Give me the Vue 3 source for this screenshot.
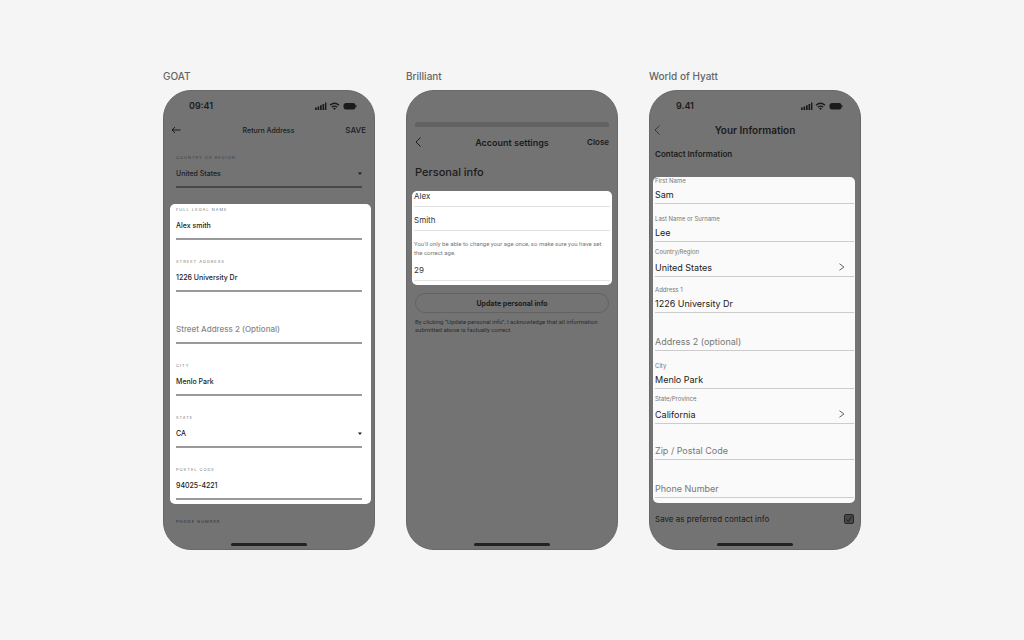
<script setup>
import { reactive } from 'vue'

const goatFields = reactive([
  { id: 'g-name', label: 'Full legal name', value: 'Alex smith' },
  { id: 'g-street', label: 'Street address', value: '1226 University Dr' },
  { id: 'g-street2', placeholder: 'Street Address 2 (Optional)', value: '' },
  { id: 'g-city', label: 'City', value: 'Menlo Park' },
  { id: 'g-state', label: 'State', value: 'CA', select: true },
  { id: 'g-postal', label: 'Postal code', value: '94025-4221' },
])

const hyattFields = reactive([
  { id: 'h-first', label: 'First Name', value: 'Sam' },
  { id: 'h-last', label: 'Last Name or Surname', value: 'Lee' },
  { id: 'h-country', label: 'Country/Region', value: 'United States', select: true },
  { id: 'h-address', label: 'Address 1', value: '1226 University Dr' },
  { id: 'h-address2', placeholder: 'Address 2 (optional)', value: '' },
  { id: 'h-city', label: 'City', value: 'Menlo Park' },
  { id: 'h-state', label: 'State/Province', value: 'California', select: true },
  { id: 'h-zip', placeholder: 'Zip / Postal Code', value: '' },
  { id: 'h-phone', placeholder: 'Phone Number', value: '' },
])

const person = reactive({ first: 'Alex', last: 'Smith', age: '29' })
</script>

<template>
  <main class="board">
    <section class="column">
      <h2 class="caption">GOAT</h2>
      <div class="phone goat">
        <div class="status">
          <span class="time">09:41</span>
          <svg class="signals" width="42" height="10" viewBox="0 0 42 10" aria-hidden="true">
            <path d="M0 6.5h1.7V9H0zM2.5 5.5h1.7V9H2.5zM5 4.2h1.7V9H5zM7.5 3h1.7V9H7.5zM10 1.5h1.4V9H10z" />
            <path class="wave" d="M15 4.2Q19.5.3 24 4.2M16.8 6.2Q19.5 4 22.2 6.2" />
            <path d="M18 7.3q1.5-1.2 3 0L19.5 9z" />
            <rect x="28.5" y="2" width="12" height="6.5" rx="2.5" />
            <path class="cap" d="M41 4.2v2" />
          </svg>
        </div>
        <div class="nav">
          <button type="button" aria-label="Back">
            <svg width="10" height="8" viewBox="0 0 10 8" aria-hidden="true"><path class="stroke" d="M9.5 4H1M4 1 1 4l3 3" /></svg>
          </button>
          <h3>Return Address</h3>
          <button type="button" class="save">SAVE</button>
        </div>
        <div class="field shaded">
          <label for="g-country">Country or region</label>
          <div class="control">
            <select id="g-country"><option>United States</option></select>
            <svg class="caret" width="4" height="3" viewBox="0 0 4 3" aria-hidden="true"><path d="M0 .5h4L2 3z" /></svg>
          </div>
        </div>
        <form class="card">
          <div v-for="f in goatFields" :key="f.id" class="field">
            <label v-if="f.label" :for="f.id">{{ f.label }}</label>
            <div class="control">
              <template v-if="f.select">
                <select :id="f.id" v-model="f.value"><option>{{ f.value }}</option></select>
                <svg class="caret" width="4" height="3" viewBox="0 0 4 3" aria-hidden="true"><path d="M0 .5h4L2 3z" /></svg>
              </template>
              <input v-else :id="f.id" v-model="f.value" type="text" :placeholder="f.placeholder" :aria-label="f.placeholder" />
            </div>
          </div>
        </form>
        <p class="next">Phone number</p>
        <div class="home"></div>
      </div>
    </section>

    <section class="column">
      <h2 class="caption">Brilliant</h2>
      <div class="phone brilliant">
        <div class="sheet"></div>
        <div class="nav">
          <button type="button" aria-label="Back">
            <svg width="6" height="10" viewBox="0 0 6 10" aria-hidden="true"><path class="stroke" d="M5.5.5 1 5l4.5 4.5" /></svg>
          </button>
          <h3>Account settings</h3>
          <button type="button" class="close">Close</button>
        </div>
        <h4>Personal info</h4>
        <form class="card">
          <input v-model="person.first" type="text" aria-label="First name" />
          <input v-model="person.last" type="text" aria-label="Last name" />
          <label for="b-age">You'll only be able to change your age once, so make sure you have set the correct age.</label>
          <input id="b-age" v-model="person.age" type="text" />
        </form>
        <button type="button" class="update">Update personal info</button>
        <p class="terms">By clicking “Update personal info”, I acknowledge that all information submitted above is factually correct.</p>
        <div class="home"></div>
      </div>
    </section>

    <section class="column">
      <h2 class="caption">World of Hyatt</h2>
      <div class="phone hyatt">
        <div class="status">
          <span class="time">9.41</span>
          <svg class="signals" width="42" height="10" viewBox="0 0 42 10" aria-hidden="true">
            <path d="M0 6.5h1.7V9H0zM2.5 5.5h1.7V9H2.5zM5 4.2h1.7V9H5zM7.5 3h1.7V9H7.5zM10 1.5h1.4V9H10z" />
            <path class="wave" d="M15 4.2Q19.5.3 24 4.2M16.8 6.2Q19.5 4 22.2 6.2" />
            <path d="M18 7.3q1.5-1.2 3 0L19.5 9z" />
            <rect x="28.5" y="2" width="12" height="6.5" rx="2.5" />
            <path class="cap" d="M41 4.2v2" />
          </svg>
        </div>
        <div class="nav">
          <button type="button" aria-label="Back">
            <svg width="6" height="10" viewBox="0 0 6 10" aria-hidden="true"><path class="stroke" d="M5.5.5 1 5l4.5 4.5" /></svg>
          </button>
          <h3>Your Information</h3>
          <span></span>
        </div>
        <h4>Contact Information</h4>
        <form class="card">
          <div v-for="f in hyattFields" :key="f.id" class="field" :class="{ pick: f.select }">
            <label v-if="f.label" :for="f.id">{{ f.label }}</label>
            <div class="control">
              <template v-if="f.select">
                <select :id="f.id" v-model="f.value"><option>{{ f.value }}</option></select>
                <svg class="chevron" width="6" height="8" viewBox="0 0 6 8" aria-hidden="true"><path class="stroke" d="M.5.5 5.3 4 .5 7.5" /></svg>
              </template>
              <input v-else :id="f.id" v-model="f.value" type="text" :placeholder="f.placeholder" :aria-label="f.placeholder" />
            </div>
          </div>
        </form>
        <label class="preferred">
          <span>Save as preferred contact info</span>
          <span class="tick">
            <input type="checkbox" checked />
            <svg width="10" height="10" viewBox="0 0 10 10" aria-hidden="true"><path class="stroke" d="M2.5 5.5 4.2 7.5 7.8 2.5" /></svg>
          </span>
        </label>
        <div class="home"></div>
      </div>
    </section>
  </main>
</template>

<style>
body {
  margin: 0;
  background: #f5f5f5;
}
</style>

<style scoped>
.board {
  box-sizing: border-box;
  min-height: 100vh;
  max-width: 698px;
  margin: 0 auto;
  padding: 69px 0 60px;
  display: grid;
  grid-template-columns: repeat(3, minmax(0, 1fr));
  align-items: start;
  gap: 31px;
  font-family: Inter, "Liberation Sans", sans-serif;
  color: #1b1b1b;
}
h2, h3, h4, p {
  margin: 0;
  font-weight: 500;
}
.caption {
  margin-bottom: 7px;
  font-size: 10px;
  line-height: 14px;
  color: #666;
}
.phone {
  box-sizing: border-box;
  min-height: 460px;
  display: flex;
  flex-direction: column;
  border: 1px solid #686868;
  border-radius: 28px;
  background: #737373;
  overflow: hidden;
}
button, input, select {
  appearance: none;
  border: 0;
  border-radius: 0;
  margin: 0;
  padding: 0;
  background: none;
  font: inherit;
  color: inherit;
  outline: 0;
}
input, select {
  display: block;
  width: 100%;
  min-width: 0;
}
svg {
  display: block;
  fill: currentColor;
}
.stroke, .wave, .cap {
  fill: none;
  stroke: currentColor;
}
.wave {
  stroke-width: 1.3;
}
.status {
  display: flex;
  align-items: center;
  justify-content: space-between;
  height: 29px;
  padding: 0 17px 0 26px;
}
.time {
  font-size: 9px;
  font-weight: 600;
}
.goat .status {
  padding-left: 25px;
}
.nav {
  display: grid;
  grid-template-columns: 1fr auto 1fr;
  align-items: center;
  height: 20px;
  padding: 0 8px;
}
.nav > :last-child {
  justify-self: end;
}
.nav > :first-child {
  justify-self: start;
}
.card {
  background: #fff;
  border-radius: 5px;
}
.home {
  width: 76px;
  height: 3px;
  margin: auto auto 3px;
  border-radius: 2px;
  background: #222;
}
.control {
  display: flex;
  align-items: center;
}

.goat .nav {
  padding-left: 7px;
}
.goat .nav h3 {
  font-size: 7px;
}
.goat .save {
  font-size: 8px;
  line-height: 10px;
  font-weight: 500;
}
.goat .field {
  padding: 17px 0 5px;
  border-bottom: 2px solid #999;
}
.goat .field label,
.next {
  display: block;
  font-size: 4px;
  line-height: 9px;
  letter-spacing: 1px;
  text-transform: uppercase;
  color: #777;
}
.goat .control {
  height: 16px;
  margin-top: 3px;
  font-size: 7px;
  font-weight: 500;
}
.goat .control:first-child {
  margin-top: 12px;
}
.goat ::placeholder {
  font-size: 8px;
  color: #888;
  opacity: 1;
}
.goat .card {
  margin: 16px 3px 0 6px;
  padding: 0 9px 4px 6px;
}
.goat .card .field:first-child {
  padding-top: 1px;
}
.goat .shaded {
  margin: 0 12px;
  padding-top: 13px;
  border-color: #484848;
}
.goat .shaded label,
.next {
  color: #404040;
}
.next {
  margin: 13px 12px 0;
}

.sheet {
  height: 5px;
  margin: 31px 8px 0;
  border-radius: 3px 3px 0 0;
  background: #626262;
}
.brilliant .nav {
  height: 30px;
}
.brilliant h3 {
  font-size: 9px;
  font-weight: 600;
}
.close {
  font-size: 8px;
  font-weight: 600;
}
.brilliant h4 {
  margin: 7px 8px 0;
  font-size: 11px;
  line-height: 16px;
}
.brilliant .card {
  margin: 11px 5px 0;
  padding: 0 2px 4px;
}
.brilliant .card input {
  height: 24px;
  box-sizing: border-box;
  padding: 2px 0 0;
  border-bottom: 1px solid #e2e2e2;
  font-size: 8px;
  color: #333;
}
.brilliant .card input:first-child {
  height: 16px;
  padding: 0 0 5px;
}
.brilliant .card label {
  display: block;
  margin: 8px 0 0;
  font-family: Roboto, "Liberation Sans", sans-serif;
  font-size: 6px;
  line-height: 9px;
  color: #777;
}
.update {
  height: 20px;
  margin: 8px 8px 0;
  border: 1px solid #626262;
  border-radius: 10px;
  font-size: 7px;
  font-weight: 700;
}
.terms {
  margin: 5px 8px 0;
  font-family: Roboto, "Liberation Sans", sans-serif;
  font-size: 6px;
  line-height: 8px;
  font-weight: 400;
  color: #2c2c2c;
}

.hyatt .nav {
  padding: 0 4px;
}
.hyatt .nav button {
  color: #383838;
}
.hyatt h3 {
  font-size: 10px;
  font-weight: 600;
}
.hyatt h4 {
  margin: 8px 5px 17px;
  font-size: 8px;
  line-height: 12px;
  font-weight: 600;
}
.hyatt .card {
  margin: 0 5px 0 3px;
  padding: 0 1px 5px 2px;
  background: #fafafa;
}
.hyatt .field {
  box-sizing: border-box;
  height: 38px;
  display: flex;
  flex-direction: column;
  justify-content: flex-end;
  padding-bottom: 2px;
  border-bottom: 1px solid #ccc;
}
.hyatt .field:first-child {
  height: 27px;
}
.hyatt .pick {
  height: 35px;
}
.hyatt .pick + .field {
  height: 36px;
}
.hyatt .field label {
  font-size: 6px;
  line-height: 8px;
  color: #777;
}
.hyatt .control {
  height: 14px;
  margin-top: 2px;
  font-size: 9px;
}
.hyatt .pick .control {
  margin-top: 4px;
}
.hyatt ::placeholder {
  color: #777;
  opacity: 1;
}
.chevron {
  margin-right: 9px;
  color: #555;
}
.preferred {
  display: flex;
  align-items: center;
  justify-content: space-between;
  margin: 11px 6px 0 5px;
  font-size: 8px;
  line-height: 10px;
}
.tick {
  display: grid;
}
.tick > * {
  grid-area: 1 / 1;
}
.tick input {
  box-sizing: border-box;
  width: 10px;
  height: 10px;
  border: 1px solid #252525;
  border-radius: 2px;
  background: #484848;
}
.tick svg {
  pointer-events: none;
}
</style>
